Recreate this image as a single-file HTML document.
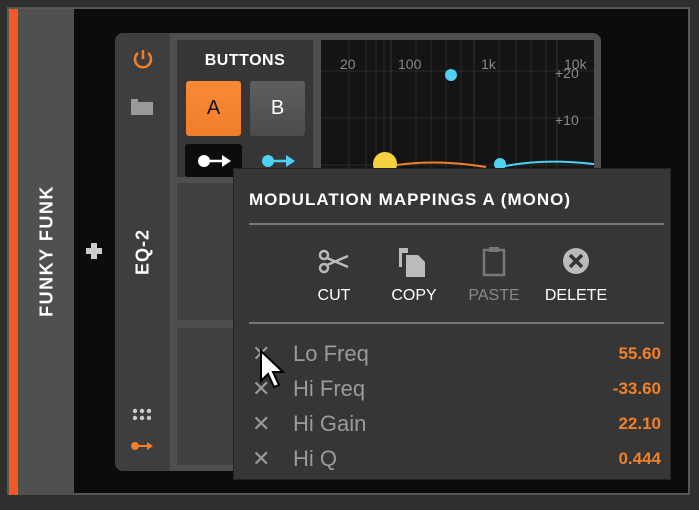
<html><head><style>
body{margin:0;width:699px;height:510px;background:#2f2f2f;position:relative;overflow:hidden;font-family:"Liberation Sans",sans-serif}
.a{position:absolute}
</style></head><body>
<div class="a" style="left:7px;top:7px;width:683px;height:488px;background:#0c0c0c;border:2px solid #575757;box-sizing:border-box"></div>
<div class="a" style="left:9px;top:9px;width:9px;height:486px;background:#f25a23"></div>
<div class="a" style="left:18px;top:9px;width:56px;height:486px;background:#505050"></div>
<div class="a" style="left:47px;top:251px;transform:translate(-50%,-50%) rotate(-90deg);color:#fff;font-weight:bold;font-size:18px;letter-spacing:1.5px;white-space:nowrap">FUNKY FUNK</div>
<div class="a" style="left:86px;top:243px;width:16px;height:16px">
<div class="a" style="left:5px;top:0;width:6px;height:16px;background:#ccc"></div><div class="a" style="left:0;top:5px;width:16px;height:6px;background:#ccc"></div></div>
<div class="a" style="left:115px;top:33px;width:486px;height:438px;background:#4e4e4e;border-radius:8px"></div>
<div class="a" style="left:115px;top:33px;width:55px;height:438px;background:#3e3e3e;border-radius:8px 0 0 8px"></div>
<svg class="a" style="left:131px;top:48px" width="24" height="24"><path d="M7 5 A8 8 0 1 0 17 5" stroke="#f0802a" stroke-width="2.5" fill="none"/><line x1="12" y1="2" x2="12" y2="11" stroke="#f0802a" stroke-width="2.5"/></svg>
<svg class="a" style="left:131px;top:98px" width="24" height="20"><path d="M0 1h7v3h15v13H0z" fill="#999"/></svg>
<div class="a" style="left:143px;top:252px;transform:translate(-50%,-50%) rotate(-90deg);color:#fff;font-weight:bold;font-size:18px;letter-spacing:1px;white-space:nowrap">EQ-2</div>
<svg class="a" style="left:131px;top:408px" width="24" height="16"><g fill="#ccc"><circle cx="4" cy="3" r="2.2"/><circle cx="11" cy="3" r="2.2"/><circle cx="18" cy="3" r="2.2"/><circle cx="4" cy="10" r="2.2"/><circle cx="11" cy="10" r="2.2"/><circle cx="18" cy="10" r="2.2"/></g></svg>
<svg class="a" style="left:130px;top:440px" width="26" height="12"><circle cx="5" cy="6" r="4" fill="#f0802a"/><line x1="5" y1="6" x2="18" y2="6" stroke="#f0802a" stroke-width="2"/><path d="M17 2l6 4-6 4z" fill="#f0802a"/></svg>
<div class="a" style="left:177px;top:40px;width:136px;height:137px;background:#363636"></div>
<div class="a" style="left:177px;top:52px;width:136px;text-align:center;color:#fff;font-weight:bold;font-size:16px;letter-spacing:0.5px">BUTTONS</div>
<div class="a" style="left:186px;top:81px;width:55px;height:55px;background:linear-gradient(#fb8a36,#ef7d2c);border-radius:3px;color:#111;font-size:20px;text-align:center;line-height:55px">A</div>
<div class="a" style="left:250px;top:81px;width:55px;height:55px;background:linear-gradient(#5e5e5e,#4c4c4c);border-radius:3px;color:#fff;font-size:20px;text-align:center;line-height:55px">B</div>
<div class="a" style="left:185px;top:144px;width:57px;height:33px;background:#0c0c0c;border-radius:3px"></div>
<svg class="a" style="left:196px;top:152px" width="40" height="18"><circle cx="8" cy="9" r="6" fill="#fff"/><line x1="8" y1="9" x2="28" y2="9" stroke="#fff" stroke-width="2.5"/><path d="M26 3l9 6-9 6z" fill="#fff"/></svg>
<svg class="a" style="left:260px;top:152px" width="40" height="18"><circle cx="8" cy="9" r="6" fill="#4fd0f5"/><line x1="8" y1="9" x2="28" y2="9" stroke="#4fd0f5" stroke-width="2.5"/><path d="M26 3l9 6-9 6z" fill="#4fd0f5"/></svg>
<div class="a" style="left:177px;top:183px;width:136px;height:137px;background:#414141"></div>
<div class="a" style="left:177px;top:328px;width:136px;height:137px;background:#414141"></div>
<svg class="a" style="left:321px;top:40px" width="273" height="140">
<rect width="273" height="140" fill="#141414"/>
<g stroke="#2a2a2a" stroke-width="1"><line x1="0" y1="31" x2="273" y2="31"/><line x1="0" y1="78" x2="273" y2="78"/><line x1="0" y1="125" x2="273" y2="125"/>
<line x1="70" y1="0" x2="70" y2="140" stroke="#333"/><line x1="153" y1="0" x2="153" y2="140" stroke="#333"/><line x1="236" y1="0" x2="236" y2="140" stroke="#333"/>
<line x1="28" y1="0" x2="28" y2="140"/><line x1="45" y1="0" x2="45" y2="140"/><line x1="55" y1="0" x2="55" y2="140"/><line x1="63" y1="0" x2="63" y2="140"/><line x1="95" y1="0" x2="95" y2="140"/><line x1="110" y1="0" x2="110" y2="140"/><line x1="125" y1="0" x2="125" y2="140"/><line x1="140" y1="0" x2="140" y2="140"/><line x1="178" y1="0" x2="178" y2="140"/><line x1="195" y1="0" x2="195" y2="140"/><line x1="210" y1="0" x2="210" y2="140"/><line x1="225" y1="0" x2="225" y2="140"/></g>
<g fill="#888" font-size="14" font-family="Liberation Sans"><text x="19" y="29">20</text><text x="77" y="29">100</text><text x="160" y="29">1k</text><text x="243" y="29">10k</text><text x="234" y="38">+20</text><text x="234" y="85">+10</text></g>
<circle cx="130" cy="35" r="6" fill="#4fd0f5"/>
<path d="M64 127 Q110 118 165 127" stroke="#f0802a" stroke-width="2" fill="none"/>
<path d="M180 127 Q220 118 273 124" stroke="#4fd0f5" stroke-width="2" fill="none"/>
<circle cx="64" cy="124" r="12" fill="#f5d040"/><circle cx="179" cy="124" r="6" fill="#4fd0f5"/>
</svg>
<div class="a" style="left:233px;top:168px;width:438px;height:312px;background:#363636;border:1px solid #222;box-sizing:border-box"></div>
<div class="a" style="left:249px;top:190px;color:#fff;font-weight:bold;font-size:17px;letter-spacing:1px;white-space:nowrap">MODULATION MAPPINGS A (MONO)</div>
<div class="a" style="left:249px;top:223px;width:415px;height:2px;background:#777"></div>
<svg class="a" style="left:318px;top:248px" width="32" height="28"><g stroke="#bbb" stroke-width="2.5" fill="none"><circle cx="6" cy="7" r="4"/><circle cx="6" cy="20" r="4"/><path d="M9 10L30 19M9 17L30 8"/></g></svg>
<svg class="a" style="left:398px;top:247px" width="32" height="30"><path d="M1 1h9v5h-6v14h-3z" fill="#bbb"/><path d="M8 8h12l7 7v15H8z" fill="#bbb"/></svg>
<svg class="a" style="left:482px;top:246px" width="26" height="32"><rect x="2" y="4" width="20" height="25" fill="none" stroke="#777" stroke-width="2.5"/><rect x="7" y="1" width="10" height="5" fill="#777"/></svg>
<svg class="a" style="left:563px;top:248px" width="28" height="28"><circle cx="13" cy="13" r="13" fill="#bbb"/><path d="M7 7L19 19M19 7L7 19" stroke="#333" stroke-width="3.5"/></svg>
<div class="a" style="top:287px;left:294px;width:80px;text-align:center;color:#fff;font-size:16px">CUT</div>
<div class="a" style="top:287px;left:374px;width:80px;text-align:center;color:#fff;font-size:16px">COPY</div>
<div class="a" style="top:287px;left:454px;width:80px;text-align:center;color:#888;font-size:16px">PASTE</div>
<div class="a" style="top:287px;left:536px;width:80px;text-align:center;color:#fff;font-size:16px">DELETE</div>
<div class="a" style="left:249px;top:322px;width:415px;height:2px;background:#777"></div>
<div class="a" style="left:252px;top:336px;width:409px;font-size:22px;line-height:35px;color:#9a9a9a">
<div style="display:flex"><span style="width:41px">✕</span><span style="flex:1">Lo Freq</span><span style="color:#f0802a;font-weight:bold;font-size:17px">55.60</span></div>
<div style="display:flex"><span style="width:41px">✕</span><span style="flex:1">Hi Freq</span><span style="color:#f0802a;font-weight:bold;font-size:17px">-33.60</span></div>
<div style="display:flex"><span style="width:41px">✕</span><span style="flex:1">Hi Gain</span><span style="color:#f0802a;font-weight:bold;font-size:17px">22.10</span></div>
<div style="display:flex"><span style="width:41px">✕</span><span style="flex:1">Hi Q</span><span style="color:#f0802a;font-weight:bold;font-size:17px">0.444</span></div>
</div>
<svg class="a" style="left:259px;top:349px" width="30" height="40"><path d="M2 2V32L9 25L15 38L20 36L14 23H24Z" fill="#fff" stroke="#000" stroke-width="2"/></svg>
</body></html>
